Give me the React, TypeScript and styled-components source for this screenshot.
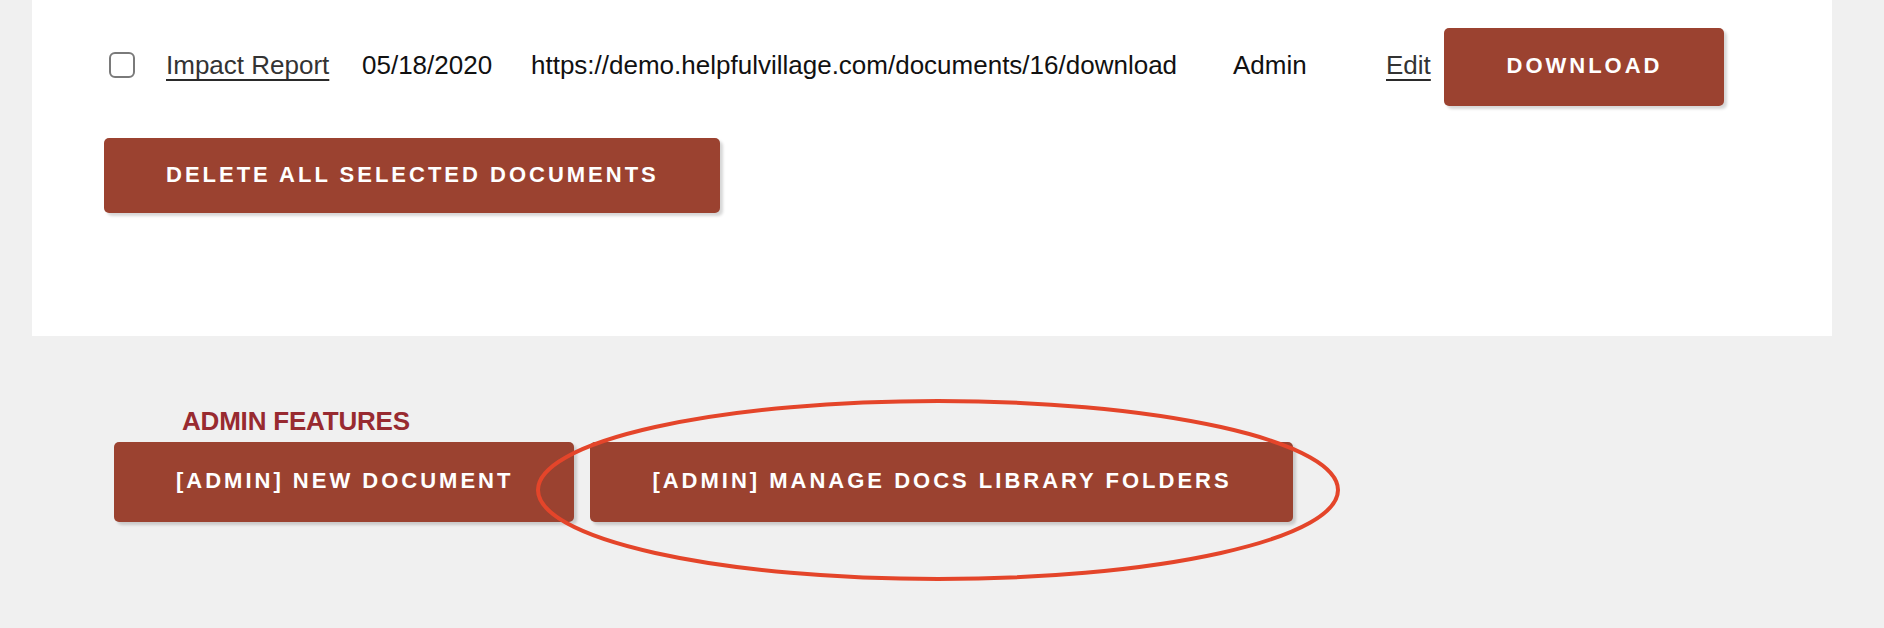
import React from "react";
import styled, { createGlobalStyle } from "styled-components";

const Global = createGlobalStyle`
  html, body {
    margin: 0;
    padding: 0;
    background: #f0f0f0;
    font-family: "Liberation Sans", Arial, Helvetica, sans-serif;
  }
  * { box-sizing: border-box; }
`;

const Page = styled.div`
  position: relative;
  width: 1884px;
  min-height: 628px;
  padding: 0 52px 0 32px;
`;

const Panel = styled.section`
  background: #ffffff;
  padding: 28px 0 123px 72px;
`;

const DocRow = styled.div`
  display: grid;
  grid-template-columns: 57px 196px 169px 702px 153px 58px 280px;
  align-items: center;
  height: 78px;
  margin-left: 5px;
  margin-bottom: 32px;
`;

const Check = styled.span`
  display: block;
  width: 26px;
  height: 26px;
  border: 2.5px solid #7a7a7a;
  border-radius: 6px;
  background: #fff;
  margin-bottom: 5px;
`;

const Cell = styled.span<{ $muted?: boolean }>`
  font-size: 26px;
  line-height: 30px;
  padding-bottom: 4px;
  color: ${(p) => (p.$muted ? "#333333" : "#111111")};
  white-space: nowrap;
`;

const Link = styled.a`
  font-size: 26px;
  line-height: 30px;
  padding-bottom: 4px;
  color: #333333;
  white-space: nowrap;
  text-decoration: underline;
  text-decoration-thickness: 2px;
  text-underline-offset: 5px;
  text-decoration-color: #2a2a2a;
  cursor: pointer;
`;

const Button = styled.button<{ $h: number }>`
  display: inline-flex;
  align-items: center;
  justify-content: center;
  height: ${(p) => p.$h}px;
  padding: 0 61px 0 62px;
  border: none;
  border-radius: 5px;
  background: #9b4230;
  color: #ffffff;
  font-family: "Liberation Sans", Arial, Helvetica, sans-serif;
  font-weight: 700;
  font-size: 22px;
  letter-spacing: 3px;
  white-space: nowrap;
  box-shadow: 3px 3px 3px rgba(0, 0, 0, 0.16);
  cursor: pointer;
  padding-bottom: 2px;
`;

const AdminSection = styled.section`
  padding: 70px 0 0 82px;
`;

const AdminTitle = styled.h3`
  margin: 0 0 6px 68px;
  font-size: 26px;
  line-height: 30px;
  font-weight: 700;
  letter-spacing: -0.2px;
  color: #982a30;
`;

const AdminButtons = styled.div`
  display: flex;
  gap: 16px;
`;

const Highlight = styled.svg`
  position: absolute;
  left: 535px;
  top: 398px;
  pointer-events: none;
`;

export default function App() {
  return (
    <Page>
      <Global />
      <Panel>
        <DocRow>
          <Check />
          <Link>Impact Report</Link>
          <Cell>05/18/2020</Cell>
          <Cell>https://demo.helpfulvillage.com/documents/16/download</Cell>
          <Cell>Admin</Cell>
          <Link>Edit</Link>
          <Button $h={78}>DOWNLOAD</Button>
        </DocRow>
        <Button $h={75}>DELETE ALL SELECTED DOCUMENTS</Button>
      </Panel>
      <AdminSection>
        <AdminTitle>ADMIN FEATURES</AdminTitle>
        <AdminButtons>
          <Button $h={80}>[ADMIN] NEW DOCUMENT</Button>
          <Button $h={80}>[ADMIN] MANAGE DOCS LIBRARY FOLDERS</Button>
        </AdminButtons>
      </AdminSection>
      <Highlight width="806" height="186" viewBox="0 0 806 186">
        <ellipse cx="403" cy="92" rx="400" ry="89" fill="none" stroke="#e4452a" strokeWidth="4" />
      </Highlight>
    </Page>
  );
}
